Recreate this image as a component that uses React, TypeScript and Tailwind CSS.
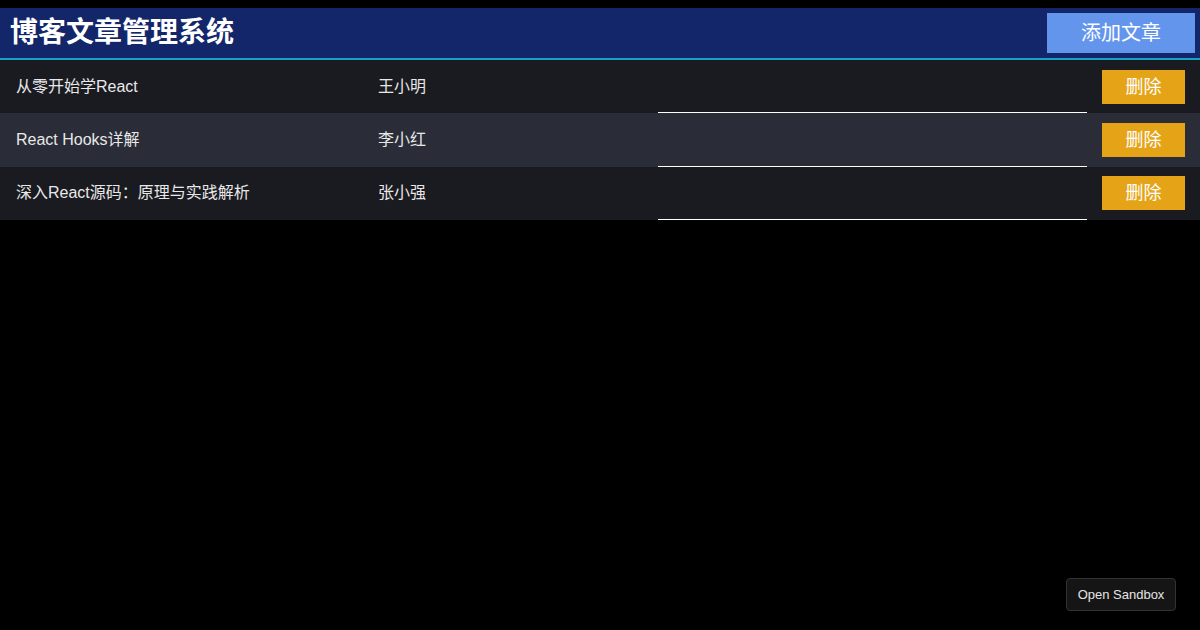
import React from 'react';

interface Post {
  title: string;
  author: string;
}

const posts: Post[] = [
  { title: '从零开始学React', author: '王小明' },
  { title: 'React Hooks详解', author: '李小红' },
  { title: '深入React源码：原理与实践解析', author: '张小强' },
];

const font = { fontFamily: '"Liberation Sans", Arial, "Noto Sans CJK SC", sans-serif' };

export default function App() {
  return (
    <div className="relative min-h-[630px] w-full bg-black pt-2" style={font}>
      <header className="flex h-[52px] items-start justify-between border-b-2 border-[#17a3c9] bg-[#13266a] pl-[10px] pr-[5px]">
        <h1 className="mt-[7px] text-[28px] font-bold leading-[36px] text-white">博客文章管理系统</h1>
        <button type="button" className="mt-[5px] h-10 w-[148px] bg-[#6495ed] text-xl text-white">
          添加文章
        </button>
      </header>

      <div>
        {posts.map((post, i) => (
          <div
            key={post.title}
            className={`grid h-[53.34px] grid-cols-[362px_296px_429px_1fr] items-center text-base text-[#e8e8e8] ${
              i % 2 === 1 ? 'bg-[#2a2d37]' : 'bg-[#1a1b20]'
            }`}
          >
            <div className="pl-4">{post.title}</div>
            <div className="pl-4">{post.author}</div>
            <div className="h-full border-b border-white" />
            <div className="flex justify-center">
              <button type="button" className="h-[34px] w-[83px] bg-[#e5a417] text-lg text-white">
                删除
              </button>
            </div>
          </div>
        ))}
      </div>

      <button
        type="button"
        className="absolute bottom-[19px] right-6 h-[33px] w-[110px] rounded border border-[#333] bg-[#151515] text-[13px] text-[#e5e5e5]"
      >
        Open Sandbox
      </button>
    </div>
  );
}
